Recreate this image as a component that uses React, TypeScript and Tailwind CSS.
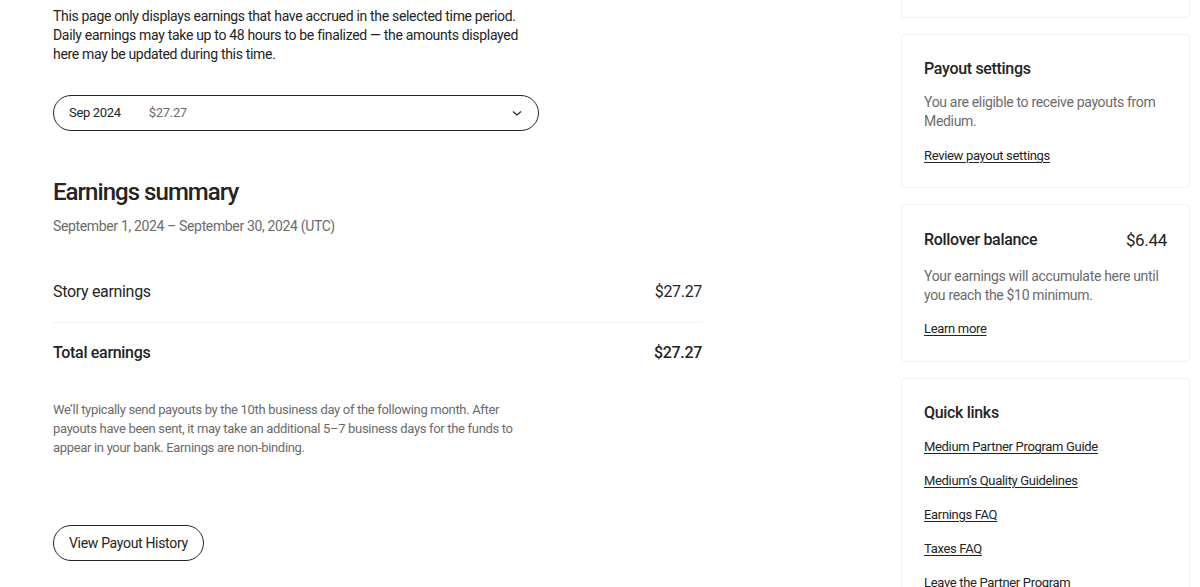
import React from "react";

const quickLinks = [
  "Medium Partner Program Guide",
  "Medium’s Quality Guidelines",
  "Earnings FAQ",
  "Taxes FAQ",
  "Leave the Partner Program",
];

const SideCard = ({
  children,
  className = "pt-[24px] pb-[21px]",
}: {
  children: React.ReactNode;
  className?: string;
}) => (
  <div className={"shrink-0 border border-[#f2f2f2] rounded-[4px] px-[22px] " + className}>
    {children}
  </div>
);

const App: React.FC = () => {
  return (
    <div
      className="flex h-[587px] overflow-hidden bg-white text-[#242424] tracking-[-0.02em]"
      style={{ fontFamily: "Roboto, 'Liberation Sans', sans-serif" }}
    >
      {/* main column */}
      <div className="w-[702px] pl-[53px] pt-[7px] shrink-0">
        <p className="text-[14px] leading-[19px] max-w-[480px]">
          This page only displays earnings that have accrued in the selected time period.
          <br />
          Daily earnings may take up to 48 hours to be finalized — the amounts displayed
          here may be updated during this time.
        </p>

        <button className="mt-[31px] w-[486px] h-[36px] border border-[#242424] rounded-full flex items-center pl-[15px] pr-[15px] text-[13px]">
          <span>Sep 2024</span>
          <span className="ml-[28px] text-[#6b6b6b]">$27.27</span>
          <svg className="ml-auto" width="12" height="12" viewBox="0 0 12 12" fill="none">
            <path d="M2 4.5 L6 8 L10 4.5" stroke="#242424" strokeWidth="1.2" />
          </svg>
        </button>

        <h2 className="mt-[46px] text-[24px] leading-[30px] font-medium tracking-[-0.04em]">
          Earnings summary
        </h2>
        <p className="mt-[9px] text-[14px] leading-[20px] text-[#6b6b6b] tracking-[-0.025em]">
          September 1, 2024 – September 30, 2024 (UTC)
        </p>

        <div className="mt-[44px] flex justify-between items-center pb-[18px] border-b border-[#f2f2f2] text-[16px] leading-[24px]">
          <span>Story earnings</span>
          <span>$27.27</span>
        </div>
        <div className="pt-[18px] flex justify-between items-center text-[16px] leading-[24px] font-medium">
          <span>Total earnings</span>
          <span>$27.27</span>
        </div>

        <p className="mt-[35px] max-w-[470px] text-[13px] leading-[19px] text-[#6b6b6b]">
          We’ll typically send payouts by the 10th business day of the following month. After
          payouts have been sent, it may take an additional 5–7 business days for the funds to
          appear in your bank. Earnings are non-binding.
        </p>

        <button className="mt-[68px] h-[36px] px-[15px] border border-[#242424] rounded-full text-[14px]">
          View Payout History
        </button>
      </div>

      {/* sidebar */}
      <div className="ml-auto mr-[10px] w-[289px] flex flex-col gap-[16px]">
        <div className="shrink-0 h-[18px] border border-t-0 border-[#f2f2f2] rounded-b-[4px]" />

        <SideCard>
          <h3 className="text-[16px] leading-[20px] font-medium">Payout settings</h3>
          <p className="mt-[14px] text-[14px] leading-[19px] text-[#6b6b6b]">
            You are eligible to receive payouts from Medium.
          </p>
          <a className="block mt-[15px] text-[13px] leading-[20px] underline underline-offset-2">
            Review payout settings
          </a>
        </SideCard>

        <SideCard className="pt-[25px] pb-[22px]">
          <div className="flex justify-between items-center text-[16px] leading-[20px]">
            <h3 className="font-medium">Rollover balance</h3>
            <span className="text-[17px]">$6.44</span>
          </div>
          <p className="mt-[17px] text-[14px] leading-[19px] text-[#6b6b6b]">
            Your earnings will accumulate here until you reach the $10 minimum.
          </p>
          <a className="block mt-[14px] text-[13px] leading-[20px] underline underline-offset-2">
            Learn more
          </a>
        </SideCard>

        <SideCard>
          <h3 className="text-[16px] leading-[20px] font-medium">Quick links</h3>
          <div className="mt-[14px] flex flex-col gap-[14px]">
            {quickLinks.map((l, i) => (
              <a
                key={l}
                className={
                  "text-[13px] leading-[20px] " +
                  (i < quickLinks.length - 1 ? "underline underline-offset-2" : "")
                }
              >
                {l}
              </a>
            ))}
          </div>
        </SideCard>
      </div>
    </div>
  );
};

export default App;
